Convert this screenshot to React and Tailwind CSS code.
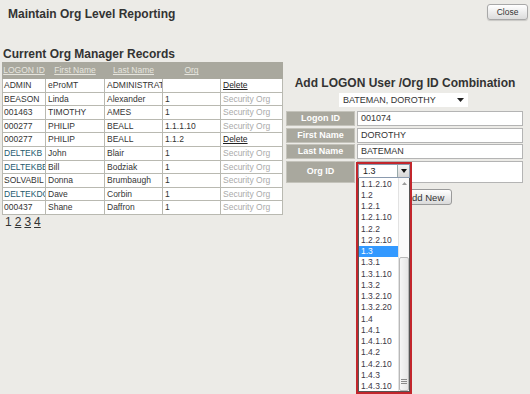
import React from "react";

const rows = [
  ["ADMIN", "eProMT", "ADMINISTRATOR", "", "Delete", false],
  ["BEASON", "Linda", "Alexander", "1", "Security Org", false],
  ["001463", "TIMOTHY", "AMES", "1", "Security Org", false],
  ["000277", "PHILIP", "BEALL", "1.1.1.10", "Security Org", false],
  ["000277", "PHILIP", "BEALL", "1.1.2", "Delete", false],
  ["DELTEKB", "John", "Blair", "1", "Security Org", true],
  ["DELTEKBE", "Bill", "Bodziak", "1", "Security Org", true],
  ["SOLVABIL", "Donna", "Brumbaugh", "1", "Security Org", false],
  ["DELTEKDC", "Dave", "Corbin", "1", "Security Org", true],
  ["000437", "Shane", "Daffron", "1", "Security Org", false],
];

const orgs = [
  "1.1.2.10", "1.2", "1.2.1", "1.2.1.10", "1.2.2", "1.2.2.10", "1.3", "1.3.1",
  "1.3.1.10", "1.3.2", "1.3.2.10", "1.3.2.20", "1.4", "1.4.1", "1.4.1.10",
  "1.4.2", "1.4.2.10", "1.4.3", "1.4.3.10",
];

function Label({ children }) {
  return (
    <div className="bg-[#a9a89e] border border-[#c4c3bb] text-white font-bold text-[9px] flex items-center justify-center leading-none">
      {children}
    </div>
  );
}

function Value({ children }) {
  return (
    <div className="bg-white border border-[#b4b4b4] text-[9px] text-[#333] flex items-center pl-[3px] leading-none">
      {children}
    </div>
  );
}

export default function App() {
  return (
    <div className="w-[530px] h-[394px] bg-[#ecebe7] relative overflow-hidden text-[#333] font-['Liberation_Sans',Arial,sans-serif]">
      <div className="flex justify-between items-start h-[40px]">
        <h1 className="pl-[8px] pt-[7px] text-[12px] leading-[14px] font-bold text-[#333]">
          Maintain Org Level Reporting
        </h1>
        <button className="mt-[4px] mr-[2px] w-[41px] h-[16px] rounded-[3px] border border-[#a8a8a8] bg-gradient-to-b from-white to-[#dcdcdc] text-[8.5px] text-[#333] leading-none shadow-[0_1px_1px_rgba(0,0,0,0.15)]">
          Close
        </button>
      </div>

      <div className="flex">
        {/* left column */}
        <div className="w-[280px] ml-[2px] pt-[7px]">
          <h2 className="pl-[1px] text-[12px] leading-[14px] font-bold text-[#333]">
            Current Org Manager Records
          </h2>
          <table className="mt-[1px] table-fixed border-collapse w-[280px] text-[8.5px] leading-none">
            <colgroup>
              <col className="w-[43px]" />
              <col className="w-[59px]" />
              <col className="w-[58px]" />
              <col className="w-[58px]" />
              <col className="w-[62px]" />
            </colgroup>
            <thead>
              <tr className="h-[16px] bg-[#a9a89e]">
                {["LOGON_ID", "First Name", "Last Name", "Org", ""].map((h, i) => (
                  <th
                    key={i}
                    className="font-normal text-[#e6e5de] underline border border-[#a9a89e] overflow-hidden whitespace-nowrap text-center px-0"
                  >
                    {h === "LOGON_ID" ? "LOGON ID" : h}
                  </th>
                ))}
              </tr>
            </thead>
            <tbody>
              {rows.map((r, i) => (
                <tr key={i} className="h-[13.6px] bg-white">
                  <td className={`border border-[#b9b9b1] pl-[1px] overflow-hidden whitespace-nowrap ${r[5] ? "text-[#245a6e]" : "text-[#333]"}`}>
                    {r[0]}
                  </td>
                  <td className="border border-[#b9b9b1] pl-[2px] overflow-hidden whitespace-nowrap">{r[1]}</td>
                  <td className="border border-[#b9b9b1] pl-[2px] overflow-hidden whitespace-nowrap">{r[2]}</td>
                  <td className="border border-[#b9b9b1] pl-[2px] overflow-hidden whitespace-nowrap">{r[3]}</td>
                  <td
                    className={`border border-[#b9b9b1] pl-[2px] overflow-hidden whitespace-nowrap ${
                      r[4] === "Delete" ? "underline text-[#222]" : "text-[#aaaaaa]"
                    }`}
                  >
                    {r[4]}
                  </td>
                </tr>
              ))}
            </tbody>
          </table>
          <div className="mt-[1px] pl-[3px] text-[12px] leading-[12px] text-[#333] flex gap-[3px]">
            <span>1</span>
            <span className="underline">2</span>
            <span className="underline">3</span>
            <span className="underline">4</span>
          </div>
        </div>

        {/* right column */}
        <div className="ml-[4px] w-[238px] pt-[36px]">
          <h2 className="text-center text-[12px] leading-[14px] font-bold text-[#333]">
            Add LOGON User /Org ID Combination
          </h2>
          <div className="mt-[3px] ml-[53px] w-[129px] h-[14px] bg-white flex items-center justify-between pl-[4px] pr-[4px] text-[9px] text-[#333] leading-none">
            <span>BATEMAN, DOROTHY</span>
            <svg width="7" height="4" viewBox="0 0 7 4">
              <path d="M0 0h7L3.5 4z" fill="#222" />
            </svg>
          </div>
          <div className="mt-[4px] grid grid-cols-[69px_166px] grid-rows-[15px_15px_15px_22px] gap-x-[2px] gap-y-[1.5px]">
            <Label>Logon ID</Label>
            <Value>001074</Value>
            <Label>First Name</Label>
            <Value>DOROTHY</Value>
            <Label>Last Name</Label>
            <Value>BATEMAN</Value>
            <Label>Org ID</Label>
            <Value>{""}</Value>
          </div>
          <div className="mt-[1px]">
            <button className="ml-[112px] w-[54px] h-[16px] rounded-[3px] border border-[#9a9a9a] bg-gradient-to-b from-white to-[#dadada] text-[9.5px] text-[#333] leading-none">
              Add New
            </button>
          </div>
        </div>
      </div>

      {/* open dropdown overlay */}
      <div className="absolute left-[356px] top-[162px] w-[56px] h-[232px] border-2 border-[#c2262c] flex flex-col bg-white">
        <div className="h-[14px] shrink-0 flex border border-[#8a9aae] bg-white">
          <div className="flex-1 pl-[4px] text-[9px] leading-[12px] text-[#222]">1.3</div>
          <div className="w-[12px] bg-gradient-to-b from-[#f4f4f4] to-[#d6d6d6] border-l border-[#9aa] flex items-center justify-center">
            <svg width="6" height="4" viewBox="0 0 6 4">
              <path d="M0 0h6L3 4z" fill="#111" />
            </svg>
          </div>
        </div>
        <div className="flex-1 flex border-x border-b border-[#555] overflow-hidden">
          <div className="w-[40px] pt-[0.5px]">
            {orgs.map((o) => (
              <div
                key={o}
                className={`h-[11.25px] pl-[2px] text-[8.5px] leading-[11.25px] whitespace-nowrap ${
                  o === "1.3" ? "bg-[#3399ff] text-white" : "text-[#3d3846]"
                }`}
              >
                {o}
              </div>
            ))}
          </div>
          <div className="flex-1 border-l border-[#e2e2e2] bg-[#fafafa] flex flex-col items-center">
            <div className="h-[10px] flex items-center justify-center">
              <svg width="5" height="3" viewBox="0 0 5 3">
                <path d="M0 3h5L2.5 0z" fill="#9a9a9a" />
              </svg>
            </div>
            <div className="mt-[69px] flex-1 w-[10px] rounded-[2px] border border-[#b8b8b8] bg-gradient-to-r from-[#f6f6f6] to-[#e6e6e6] flex flex-col justify-end items-center pb-[6px]">
              <svg width="6" height="5" viewBox="0 0 6 5">
                <path d="M0 0.5h6M0 2.5h6M0 4.5h6" stroke="#8a8a8a" strokeWidth="1" />
              </svg>
            </div>
          </div>
        </div>
      </div>
    </div>
  );
}
